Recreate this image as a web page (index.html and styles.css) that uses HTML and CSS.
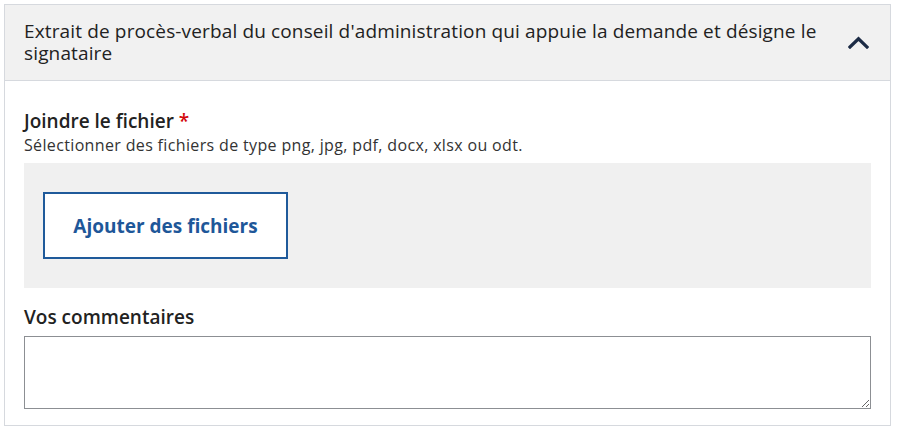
FILE: index.html
```html
<!DOCTYPE html>
<html lang="fr">
<head>
<meta charset="utf-8">
<title>Pièce jointe</title>
<link rel="stylesheet" href="styles.css">
</head>
<body>
<section class="panel">
  <header class="panel-header">
    <h2 class="panel-title">Extrait de procès-verbal du conseil d'administration qui appuie la demande et désigne le signataire</h2>
    <svg class="chevron" width="21" height="13" viewBox="0 0 21 13" aria-hidden="true">
      <polyline points="2,11 10.5,2.8 19,11" fill="none" stroke="#1c2b45" stroke-width="3.2" stroke-linecap="square"/>
    </svg>
  </header>
  <div class="panel-body">
    <label class="field-label file-label">Joindre le fichier <span class="required">*</span></label>
    <p class="hint">Sélectionner des fichiers de type png, jpg, pdf, docx, xlsx ou odt.</p>
    <div class="dropzone">
      <button class="add-btn" type="button">Ajouter des fichiers</button>
    </div>
    <label class="field-label comments-label" for="comments">Vos commentaires</label>
    <textarea id="comments" class="comments"></textarea>
  </div>
</section>
</body>
</html>
```
FILE: styles.css
```css
* { box-sizing: border-box; }
html, body { margin: 0; background: #ffffff; }
body {
  padding: 4px 0 0 4px;
  font-family: "Open Sans", "Noto Sans", sans-serif;
  color: #222;
}
.panel {
  width: 887px;
  height: 422px;
  border: 1px solid #d6d9de;
  display: flex;
  flex-direction: column;
}
.panel-header {
  background: #f1f1f1;
  border-bottom: 1px solid #d6d9de;
  display: flex;
  align-items: center;
  justify-content: space-between;
  padding: 0 21px 1px 19px;
  height: 76px;
  flex: none;
}
.panel-title {
  margin: 0;
  font-size: 19px;
  font-weight: 400;
  line-height: 22px;
  letter-spacing: 0.14px;
  color: #222;
  width: 805px;
}
.chevron { flex: none; }
.panel-body {
  padding: 31px 19px 15px 19px;
  display: flex;
  flex-direction: column;
  flex: 1;
}
.field-label {
  font-size: 19px;
  font-weight: 600;
  line-height: 20px;
  color: #222;
  display: block;
}
.file-label { line-height: 18px; }
.required { color: #d3080c; }
.hint {
  margin: 5px 0 0;
  font-size: 16px;
  line-height: 20px;
  letter-spacing: 0.35px;
  color: #333;
}
.dropzone {
  margin-top: 8px;
  background: #f0f0f0;
  padding: 29px 19px;
  display: flex;
  flex: none;
}
.add-btn {
  width: 245px;
  height: 67px;
  background: #fff;
  border: 2px solid #1f5a9a;
  border-radius: 0;
  font-family: "Open Sans", "Noto Sans", sans-serif;
  font-size: 19px;
  font-weight: 700;
  color: #1e5799;
  padding: 0;
}
.comments-label { margin-top: 19px; }
.comments {
  margin-top: 9px;
  width: 100%;
  height: 73px;
  flex: none;
  border: 1px solid #8c8f93;
  border-radius: 0;
  font-family: "Open Sans", "Noto Sans", sans-serif;
  padding: 4px;
}
```
